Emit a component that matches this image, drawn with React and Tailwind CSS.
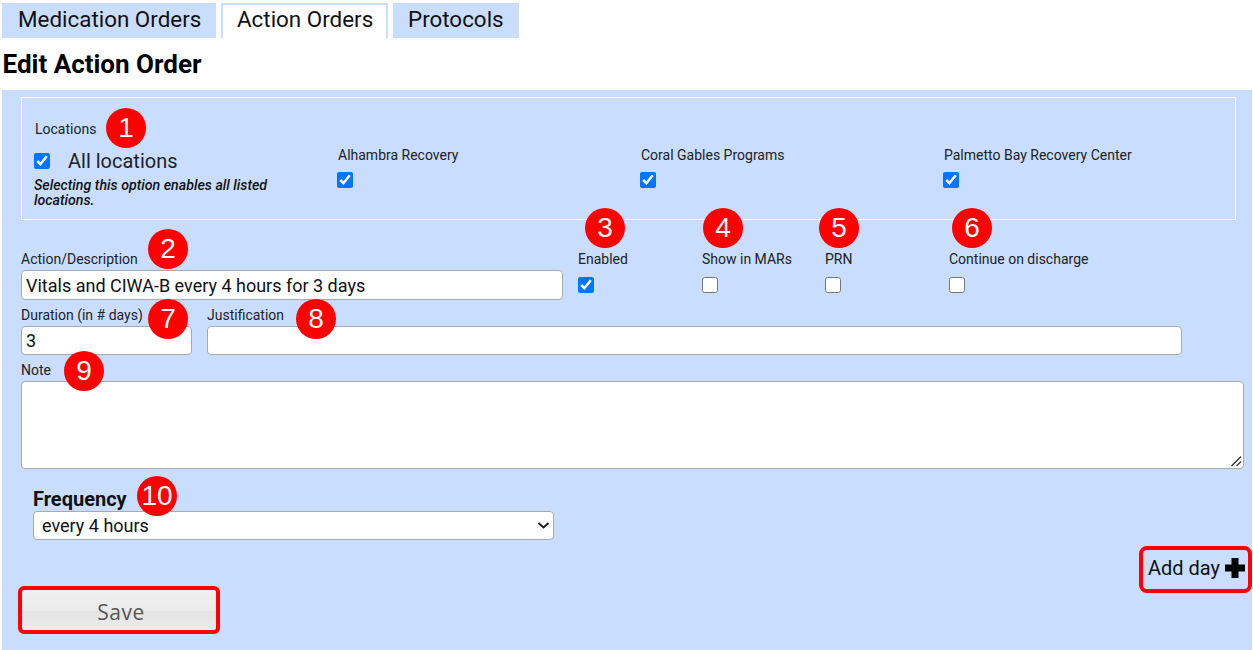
import React from "react";

function Badge({ className, children }) {
  return (
    <span className={"absolute flex h-10 w-10 items-center justify-center rounded-full bg-[#ff0000] text-[28px] leading-none text-white font-['Liberation_Sans',sans-serif] " + className}>
      {children}
    </span>
  );
}

function Check({ checked, className = "" }) {
  return <input type="checkbox" defaultChecked={checked} className={"m-0 block h-4 w-4 accent-[#0075ff] " + className} />;
}

function Tab({ active, children, className = "" }) {
  return (
    <div className={(active ? "h-[35px] border-2 border-b-0 border-[#c9deff] bg-white " : "h-[35px] bg-[#c9deff] pt-[2px] ") + "text-[22.4px] leading-[28px] text-[#111] " + className}>
      {children}
    </div>
  );
}

const field = "block rounded-[4px] border border-[#a9a9a9] bg-white text-[18px] text-[#111] outline-none";

export default function App() {
  return (
    <div className="relative h-[650px] w-[1253px] overflow-hidden bg-white font-['Roboto',sans-serif] text-[#222]">
      <div className="flex gap-[5px] pl-[2px] pt-[3px]">
        <Tab className="w-[214px] pl-[16px]">Medication Orders</Tab>
        <Tab active className="w-[167px] pl-[14px]">Action Orders</Tab>
        <Tab className="w-[126px] pl-[15px]">Protocols</Tab>
      </div>
      <h1 className="mt-[10px] pl-[2.5px] text-[26px] font-bold leading-[32px] text-black">Edit Action Order</h1>

      <div className="ml-[2px] mt-[10px] h-[560px] w-[1250px] bg-[#c9deff] pt-[7px]">
        <div className="ml-[19px] flex h-[123px] w-[1215px] border border-white pl-[12px]">
          <div className="w-[304px] shrink-0 pt-[23px]">
            <div className="pl-[1px] text-[14px] leading-[17px]">Locations</div>
            <div className="mt-[11px] flex items-center">
              <Check checked />
              <span className="ml-[18px] text-[20px] leading-[24px] text-[#222]">All locations</span>
            </div>
            <div className="mt-[5px] w-[250px] text-[14.2px] font-medium italic leading-[15px] text-[#111]">
              Selecting this option enables all listed locations.
            </div>
          </div>
          {["Alhambra Recovery", "Coral Gables Programs", "Palmetto Bay Recovery Center"].map((n) => (
            <div key={n} className="w-[303px] shrink-0 pt-[49px]">
              <div className="text-[14px] leading-[17px]">{n}</div>
              <Check checked className="-ml-[1px] mt-[8px]" />
            </div>
          ))}
        </div>

        <div className="ml-[19px] mt-[31px] flex">
          <div className="w-[542px]">
            <div className="text-[14px] leading-[17px]">Action/Description</div>
            <input readOnly value="Vitals and CIWA-B every 4 hours for 3 days" className={field + " mt-[2px] h-[30px] w-[542px] px-[4px]"} />
          </div>
          <div className="ml-[15px] w-[124px]">
            <div className="text-[14px] leading-[17px]">Enabled</div>
            <Check checked className="mt-[9px]" />
          </div>
          <div className="w-[123px]">
            <div className="text-[14px] leading-[17px]">Show in MARs</div>
            <Check className="mt-[9px]" />
          </div>
          <div className="w-[124px]">
            <div className="text-[14px] leading-[17px]">PRN</div>
            <Check className="mt-[9px]" />
          </div>
          <div>
            <div className="text-[14px] leading-[17px]">Continue on discharge</div>
            <Check className="mt-[9px]" />
          </div>
        </div>

        <div className="ml-[19px] mt-[7px] flex gap-[15px]">
          <div className="w-[171px]">
            <div className="text-[14px] leading-[17px]">Duration (in # days)</div>
            <input readOnly value="3" className={field + " mt-[2px] h-[29px] w-[171px] px-[4px]"} />
          </div>
          <div className="w-[975px]">
            <div className="text-[14px] leading-[17px]">Justification</div>
            <input readOnly value="" className={field + " mt-[2px] h-[29px] w-[975px] px-[4px]"} />
          </div>
        </div>

        <div className="ml-[19px] mt-[7px]">
          <div className="text-[14px] leading-[17px]">Note</div>
          <div className="relative mt-[2px] w-[1223px]">
            <textarea readOnly className={field + " h-[88px] w-[1223px] resize-none"} />
            <svg viewBox="0 0 12 12" className="absolute bottom-[2px] right-[2px] h-3 w-3" aria-hidden="true">
              <path d="M1.5 11 11 1.5M6.5 11 11 6.5" stroke="#333" strokeWidth="1.3" fill="none" />
            </svg>
          </div>
        </div>

        <div className="ml-[31px] mt-[19px]">
          <div className="text-[20px] font-bold leading-[22px] text-[#111]">Frequency</div>
          <div className="relative mt-[1px] w-[521px]">
            <select className={field + " h-[29px] w-[521px] appearance-none pl-[8px]"} defaultValue="every 4 hours">
              <option>every 4 hours</option>
            </select>
            <svg viewBox="0 0 12 7" className="pointer-events-none absolute right-[4px] top-[11px] h-[7px] w-[13px]" aria-hidden="true">
              <path d="M1 1l5 4.5L11 1" stroke="#1a1a1a" strokeWidth="1.8" fill="none" />
            </svg>
          </div>
        </div>

        <div className="mt-[6px] flex justify-end">
          <div className="flex h-[47px] w-[113px] items-center rounded-[8px] border-[4px] border-[#ff0000] pb-[3px] pl-[5px]">
            <span className="text-[20px] leading-[24px] text-[#111]">Add day</span>
            <svg viewBox="0 0 22 22" className="ml-[4px] h-[22px] w-[22px]" aria-hidden="true">
              <path d="M7.5 1h7v6.5H21v7h-6.5V21h-7v-6.5H1v-7h6.5z" fill="#000" />
            </svg>
          </div>
        </div>

        <div className="-mt-[7px] ml-[16px] flex h-[48px] w-[202px] items-center justify-center rounded-[6px] border-[4px] border-[#ff0000] bg-[linear-gradient(#f0f0f0_0%,#ebebeb_50%,#e3e3e3_55%,#ececec_100%)] pl-[4px] pt-[5px] font-['Open_Sans',sans-serif] text-[21px] tracking-[0.5px] text-[#555]">
          Save
        </div>
      </div>

      <Badge className="left-[106px] top-[108px]">1</Badge>
      <Badge className="left-[148px] top-[229px]">2</Badge>
      <Badge className="left-[585px] top-[208px]">3</Badge>
      <Badge className="left-[703px] top-[208px]">4</Badge>
      <Badge className="left-[819px] top-[208px]">5</Badge>
      <Badge className="left-[952px] top-[208px]">6</Badge>
      <Badge className="left-[148px] top-[299px]">7</Badge>
      <Badge className="left-[296px] top-[299px]">8</Badge>
      <Badge className="left-[64px] top-[351px]">9</Badge>
      <Badge className="left-[137px] top-[476px]">10</Badge>
    </div>
  );
}
